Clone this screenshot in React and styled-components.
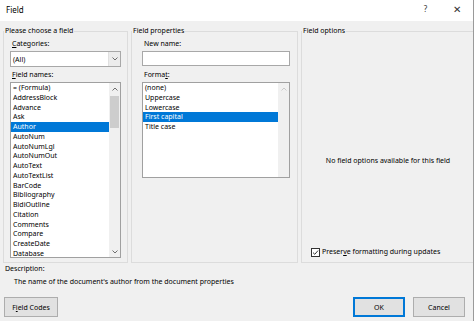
import React from 'react';
import styled, { createGlobalStyle } from 'styled-components';

const GlobalStyle = createGlobalStyle`
  html, body {
    margin: 0;
    padding: 0;
    background: #f0f0f0;
  }
  body {
    font-family: "Noto Sans", "Open Sans", sans-serif;
    font-size: 7px;
    color: #000;
  }
`;

const Dialog = styled.div`
  width: 474px;
  height: 321px;
  box-sizing: border-box;
  display: flex;
  flex-direction: column;
  background: #f0f0f0;
  border-right: 1px solid #9a9a9a;
  overflow: hidden;
`;

const TitleBar = styled.div`
  height: 21px;
  flex: none;
  background: #fff;
  display: flex;
  align-items: center;
  justify-content: space-between;
`;

const Title = styled.span`
  padding-left: 6px;
  font-size: 8px;
  margin-top: -2px;
`;

const TitleButtons = styled.div`
  display: flex;
  height: 100%;
  padding-right: 1px;
`;

const TitleBtn = styled.div`
  width: 31px;
  height: 100%;
  display: flex;
  align-items: center;
  justify-content: center;
  font-size: ${p => (p.$big ? '10px' : '8px')};
  color: #333;
  margin-top: -2px;
`;

const Content = styled.div`
  flex: 1;
  display: flex;
  flex-direction: column;
  padding: 5px 2px 0 3px;
`;

const Groups = styled.div`
  display: grid;
  grid-template-columns: 125px 167px 174px;
  column-gap: 3px;
  height: 237px;
`;

const Group = styled.fieldset`
  margin: 0;
  min-width: 0;
  border: 1px solid #dcdcdc;
  padding: 0 ${p => p.$right}px 3px ${p => p.$left}px;
  display: flex;
  flex-direction: column;
  box-sizing: border-box;

  legend {
    margin-left: -${p => p.$left}px;
    padding: 0 1px;
    line-height: 10px;
    font-size: 7px;
  }
`;

const Label = styled.div`
  line-height: 10px;
  margin-top: ${p => p.$top || 3}px;
  padding-left: 2px;
  white-space: nowrap;

  u {
    text-decoration: underline;
    text-underline-offset: 1px;
  }
`;

const Combo = styled.div`
  margin-top: 2px;
  height: 16px;
  box-sizing: border-box;
  border: 1px solid #a8a8a8;
  background: #fff;
  display: flex;
  align-items: stretch;
`;

const ComboText = styled.div`
  flex: 1;
  display: flex;
  align-items: center;
  padding-left: 2px;
`;

const ComboArrow = styled.div`
  width: 11px;
  background: #ececec;
  border-left: 1px solid #e0e0e0;
  display: flex;
  align-items: center;
  justify-content: center;
`;

const TextInput = styled.div`
  margin-top: 2px;
  height: 15px;
  box-sizing: border-box;
  border: 1px solid #a8a8a8;
  background: #fff;
`;

const ListBox = styled.div`
  margin-top: 2px;
  height: ${p => p.$height}px;
  box-sizing: border-box;
  border: 1px solid #a0a0a0;
  background: #fff;
  display: flex;
`;

const Items = styled.div`
  flex: 1;
  display: flex;
  flex-direction: column;
  min-width: 0;
`;

const Item = styled.div`
  height: 9.75px;
  line-height: 9.75px;
  padding-left: 2px;
  white-space: nowrap;
  background: ${p => (p.$selected ? '#0078d7' : 'transparent')};
  color: ${p => (p.$selected ? '#fff' : '#000')};
`;

const ScrollBar = styled.div`
  width: 11px;
  background: #f0f0f0;
  display: flex;
  flex-direction: column;
`;

const ScrollArrow = styled.div`
  height: 11px;
  display: flex;
  align-items: center;
  justify-content: center;
`;

const ScrollTrack = styled.div`
  flex: 1;
  display: flex;
  flex-direction: column;
  align-items: center;
`;

const Thumb = styled.div`
  width: 9px;
  margin-top: ${p => p.$top}px;
  height: ${p => p.$height}px;
  background: #cdcdcd;
`;

const OptionsBody = styled.div`
  flex: 1;
  display: flex;
  align-items: center;
  justify-content: center;
  padding-top: 38px;
`;

const CheckRow = styled.label`
  display: flex;
  align-items: center;
  gap: 2px;
  padding-left: 3px;
  line-height: 10px;
  margin-bottom: 2px;

  u {
    text-underline-offset: 1px;
  }
`;

const CheckBox = styled.span`
  width: 9px;
  height: 9px;
  box-sizing: border-box;
  border: 1px solid #333;
  background: #fff;
  display: flex;
  align-items: center;
  justify-content: center;
`;

const Description = styled.div`
  padding-left: 2px;
  line-height: 10px;
  margin-top: 1px;
`;

const DescriptionText = styled.div`
  padding-left: 11px;
  line-height: 10px;
  margin-top: 3px;
`;

const ButtonRow = styled.div`
  margin-top: 10px;
  display: flex;
  align-items: center;
  padding-left: 1px;
  padding-right: 6px;
  gap: 8px;
`;

const Spacer = styled.div`
  flex: 1;
`;

const Button = styled.div`
  width: ${p => p.$width}px;
  height: 20px;
  box-sizing: border-box;
  background: #e1e1e1;
  border: ${p => (p.$default ? '2px solid #0078d7' : '1px solid #adadad')};
  display: flex;
  align-items: center;
  justify-content: center;
  font-size: 7px;

  u {
    text-underline-offset: 1px;
  }
`;

const Chevron = ({ up, color = '#606060' }) => (
  <svg width="6" height="4" viewBox="0 0 6 4">
    <polyline
      points={up ? '0.5,3.5 3,1 5.5,3.5' : '0.5,0.5 3,3 5.5,0.5'}
      fill="none"
      stroke={color}
      strokeWidth="0.9"
    />
  </svg>
);

const fieldNames = [
  '= (Formula)', 'AddressBlock', 'Advance', 'Ask', 'Author', 'AutoNum',
  'AutoNumLgl', 'AutoNumOut', 'AutoText', 'AutoTextList', 'BarCode',
  'Bibliography', 'BidiOutline', 'Citation', 'Comments', 'Compare',
  'CreateDate', 'Database',
];

const formats = ['(none)', 'Uppercase', 'Lowercase', 'First capital', 'Title case'];

const App = () => (
  <>
    <GlobalStyle />
    <Dialog>
      <TitleBar>
        <Title>Field</Title>
        <TitleButtons>
          <TitleBtn>?</TitleBtn>
          <TitleBtn $big>✕</TitleBtn>
        </TitleButtons>
      </TitleBar>
      <Content>
        <Groups>
          <Group $left={6} $right={6}>
            <legend>Please choose a field</legend>
            <Label $top={3}><u>C</u>ategories:</Label>
            <Combo>
              <ComboText>(All)</ComboText>
              <ComboArrow><Chevron /></ComboArrow>
            </Combo>
            <Label><u>F</u>ield names:</Label>
            <ListBox $height={176}>
              <Items>
                {fieldNames.map(name => (
                  <Item key={name} $selected={name === 'Author'}>{name}</Item>
                ))}
              </Items>
              <ScrollBar>
                <ScrollArrow><Chevron up /></ScrollArrow>
                <ScrollTrack><Thumb $top={2} $height={32} /></ScrollTrack>
                <ScrollArrow><Chevron /></ScrollArrow>
              </ScrollBar>
            </ListBox>
          </Group>
          <Group $left={10} $right={7}>
            <legend>Field properties</legend>
            <Label $top={3}>New name:</Label>
            <TextInput />
            <Label $top={4}>Forma<u>t</u>:</Label>
            <ListBox $height={96}>
              <Items>
                {formats.map(f => (
                  <Item key={f} $selected={f === 'First capital'}>{f}</Item>
                ))}
              </Items>
              <ScrollBar>
                <ScrollArrow><Chevron up color="#c4c4c4" /></ScrollArrow>
              </ScrollBar>
            </ListBox>
          </Group>
          <Group $left={6} $right={6}>
            <legend>Field options</legend>
            <OptionsBody>No field options available for this field</OptionsBody>
            <CheckRow>
              <CheckBox>
                <svg width="7" height="7" viewBox="0 0 7 7">
                  <polyline points="1,3.6 2.8,5.3 6,1.6" fill="none" stroke="#222" strokeWidth="0.9" />
                </svg>
              </CheckBox>
              <span>Preser<u>v</u>e formatting during updates</span>
            </CheckRow>
          </Group>
        </Groups>
        <Description>Description:</Description>
        <DescriptionText>The name of the document's author from the document properties</DescriptionText>
        <ButtonRow>
          <Button $width={54}>F<u>i</u>eld Codes</Button>
          <Spacer />
          <Button $width={52} $default>OK</Button>
          <Button $width={52}>Cancel</Button>
        </ButtonRow>
      </Content>
    </Dialog>
  </>
);

export default App;
